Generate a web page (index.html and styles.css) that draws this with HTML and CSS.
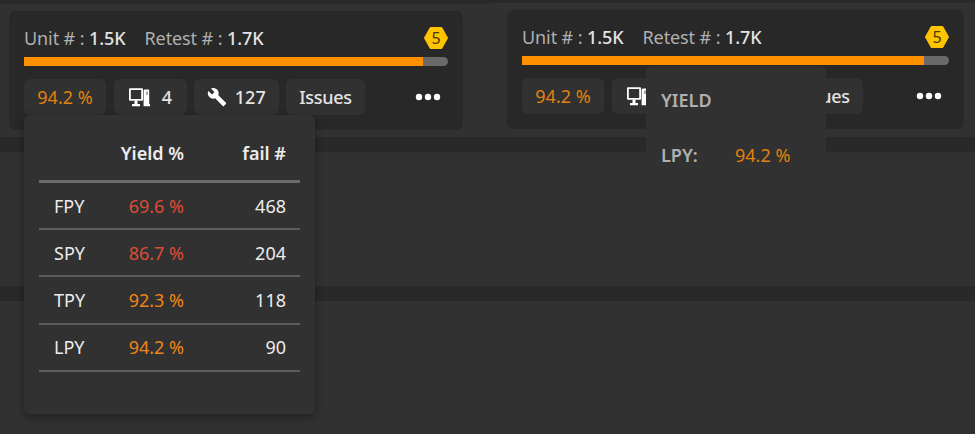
FILE: index.html
```html
<!DOCTYPE html>
<html lang="en">

<head>
    <meta charset="UTF-8">
    <meta name="viewport" content="width=device-width, initial-scale=1.0">
    <title>Yield</title>
    <link rel="stylesheet" href="styles.css">
</head>

<body>
    <svg width="0" height="0" class="sprite">
        <symbol id="station" viewBox="0 0 23 19">
            <path d="M1.9 1.2h12.2v10.6H1.9z" fill="none" stroke="currentColor" stroke-width="1.8" stroke-linejoin="round" />
            <path d="M6.5 12.5h3V16H12v2.2H4V16h2.5zM16.5 1.5h3.7a1 1 0 0 1 1 1V16h.8v2.2h-6.4V16V2.5z" fill="currentColor" />
            <path d="M18.5 3.5h1V7h-1z" fill="#555" />
        </symbol>
        <symbol id="wrench" viewBox="0 0 24 24">
            <path d="M22.7 19l-9.1-9.1c.9-2.3.4-5-1.5-6.9-2-2-5-2.4-7.4-1.3L9 6 6 9 1.6 4.7C.4 7.1.9 10.1 2.9 12.1c1.9 1.9 4.6 2.4 6.9 1.5l9.1 9.1c.4.4 1 .4 1.4 0l2.3-2.3c.5-.4.5-1.1.1-1.4z" fill="currentColor" />
        </symbol>
        <symbol id="hexagon" viewBox="0 0 24 22">
            <path d="M6.6 0h10.8a1 1 0 0 1 .8.5l5.6 9.9a1 1 0 0 1 0 1.2l-5.6 9.9a1 1 0 0 1-.8.5H6.6a1 1 0 0 1-.8-.5L.2 11.6a1 1 0 0 1 0-1.2L5.8.5a1 1 0 0 1 .8-.5z" fill="#ffc400" />
        </symbol>
        <symbol id="more" viewBox="0 0 26 8">
            <circle cx="4" cy="4" r="3.2" fill="currentColor" />
            <circle cx="13" cy="4" r="3.2" fill="currentColor" />
            <circle cx="22" cy="4" r="3.2" fill="currentColor" />
        </symbol>
    </svg>

    <div class="board">
        <section class="column">
            <div class="panel first">
                <div class="card">
                    <div class="head">
                        <span class="stat">Unit # : <b>1.5K</b></span>
                        <span class="stat">Retest # : <b>1.7K</b></span>
                        <span class="badge"><svg><use href="#hexagon" /></svg><i>5</i></span>
                    </div>
                    <div class="bar"><div class="fill" style="width: 94.2%"></div></div>
                    <div class="chips">
                        <span class="chip yield">94.2 %</span>
                        <span class="chip units"><svg class="station"><use href="#station" /></svg>4</span>
                        <span class="chip repairs"><svg class="wrench"><use href="#wrench" /></svg>127</span>
                        <span class="chip issues">Issues</span>
                        <svg class="more"><use href="#more" /></svg>
                    </div>
                    <div class="dropdown">
                        <table>
                            <thead>
                                <tr><th></th><th>Yield %</th><th>fail #</th></tr>
                            </thead>
                            <tbody>
                                <tr><td>FPY</td><td class="red">69.6 %</td><td>468</td></tr>
                                <tr><td>SPY</td><td class="red">86.7 %</td><td>204</td></tr>
                                <tr><td>TPY</td><td class="orange">92.3 %</td><td>118</td></tr>
                                <tr><td>LPY</td><td class="orange">94.2 %</td><td>90</td></tr>
                            </tbody>
                        </table>
                    </div>
                </div>
            </div>
            <div class="panel"></div>
            <div class="panel last"></div>
        </section>

        <section class="column right">
            <div class="panel first">
                <div class="card">
                    <div class="head">
                        <span class="stat">Unit # : <b>1.5K</b></span>
                        <span class="stat">Retest # : <b>1.7K</b></span>
                        <span class="badge"><svg><use href="#hexagon" /></svg><i>5</i></span>
                    </div>
                    <div class="bar"><div class="fill" style="width: 94.2%"></div></div>
                    <div class="chips">
                        <span class="chip yield">94.2 %</span>
                        <span class="chip units"><svg class="station"><use href="#station" /></svg>4</span>
                        <span class="chip repairs"><svg class="wrench"><use href="#wrench" /></svg>127</span>
                        <span class="chip issues">Issues</span>
                        <svg class="more"><use href="#more" /></svg>
                    </div>
                    <div class="tooltip">
                        <div class="title">YIELD</div>
                        <div class="row"><span>LPY:</span><span class="value">94.2 %</span></div>
                    </div>
                </div>
            </div>
            <div class="panel"></div>
            <div class="panel last"></div>
        </section>
    </div>
</body>

</html>
```
FILE: styles.css
```css
* {
    box-sizing: border-box;
}

body {
    margin: 0;
    background-color: #292929;
    color: #e4e4e4;
    font-family: "Noto Sans", sans-serif;
    font-size: 18px;
    line-height: 24px;
    overflow: hidden;
}

.sprite {
    position: absolute;
}

.board {
    display: grid;
    grid-template-columns: 490px 485px;
    height: 434px;
}

.column {
    display: flex;
    flex-direction: column;
    gap: 15px;
    padding-top: 4px;
}

.column.right {
    padding-top: 3px;
}

.panel {
    background-color: #313131;
    height: 134px;
}

.panel.first {
    height: 133px;
    padding: 7px 27px 0 9px;
}

.right .panel.first {
    height: 134px;
    padding: 7px 11px 0 17px;
}

.panel.last {
    flex: 1;
}

.card {
    position: relative;
    height: 119px;
    padding: 14px 15px;
    background-color: #282828;
    border-radius: 7px;
}

.head {
    display: flex;
    align-items: center;
    gap: 19px;
    height: 25px;
    letter-spacing: -0.1px;
}

.stat {
    color: #b0b0b0;
    white-space: nowrap;
}

.stat b {
    color: #e4e4e4;
    font-weight: 500;
}

.badge {
    display: grid;
    place-items: center;
    width: 24px;
    height: 22px;
    margin-left: auto;
}

.badge svg,
.badge i {
    grid-area: 1 / 1;
}

.badge svg {
    width: 24px;
    height: 22px;
}

.badge i {
    z-index: 1;
    color: #4a3b05;
    font-size: 16px;
    font-style: normal;
    line-height: 22px;
}

.bar {
    height: 9px;
    margin-top: 7px;
    background-color: #6a6a6a;
    border-radius: 0 5px 5px 0;
    overflow: hidden;
}

.fill {
    height: 100%;
    background-color: #ff9000;
}

.chips {
    display: flex;
    align-items: center;
    gap: 7.5px;
    margin-top: 13px;
}

.chip {
    display: flex;
    align-items: center;
    justify-content: center;
    height: 36px;
    background-color: #313131;
    border-radius: 6px;
    font-weight: 500;
}

.yield {
    width: 82px;
    color: #e0820c;
    font-weight: 400;
}

.units {
    width: 73px;
    gap: 11px;
}

.repairs {
    width: 84.5px;
    gap: 8px;
}

.issues {
    width: 79px;
    letter-spacing: -0.3px;
}

.station {
    width: 23px;
    height: 19px;
    color: #fff;
}

.wrench {
    width: 20px;
    height: 20px;
    color: #fff;
}

.more {
    width: 26px;
    height: 8px;
    margin-left: auto;
    margin-right: 7px;
    color: #fff;
}

.dropdown {
    position: absolute;
    z-index: 2;
    top: 104px;
    left: 15px;
    width: 291px;
    height: 299px;
    padding: 15px 15px 0;
    background-color: #313131;
    border-radius: 6px;
    box-shadow: 0 3px 8px rgba(0, 0, 0, 0.35);
    color: #ececec;
}

table {
    width: 100%;
    border-collapse: separate;
    border-spacing: 0;
    table-layout: fixed;
}

th,
td {
    height: 47.3px;
    padding: 0 14px 0 0;
    border-bottom: 2px solid #5c5c5c;
    text-align: right;
    font-weight: 400;
}

th {
    height: 53px;
    padding-bottom: 5px;
    border-bottom: 3px solid #6a6a6a;
    font-weight: 600;
}

tbody tr:first-child td {
    height: 47px;
}

th:first-child,
td:first-child {
    width: 70px;
    padding: 0 0 0 15px;
    text-align: left;
}

th:nth-child(2),
td:nth-child(2) {
    width: 89px;
}

.red {
    color: #dc4c34;
}

.orange {
    color: #f08517;
}

.tooltip {
    position: absolute;
    z-index: 2;
    top: 56px;
    left: 139px;
    width: 180px;
    height: 134px;
    padding: 22px 15px;
    background-color: #313131;
    border-radius: 6px;
    color: #b0b0b0;
    font-weight: 600;
}

.tooltip .row {
    display: flex;
    margin-top: 31px;
}

.tooltip .row span:first-child {
    width: 74px;
}

.tooltip .value {
    color: #e0820c;
    font-weight: 400;
}
```
